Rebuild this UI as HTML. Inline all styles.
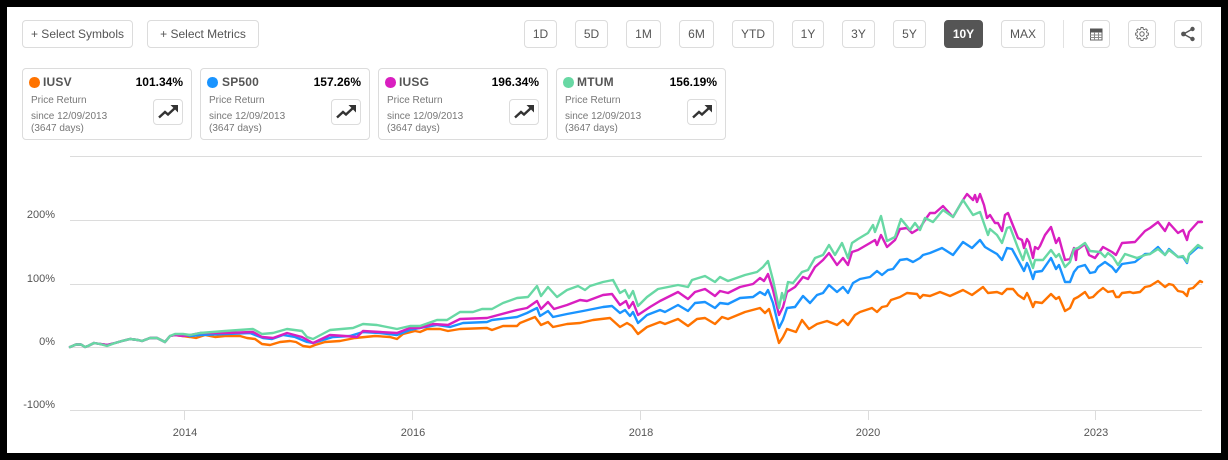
<!DOCTYPE html>
<html><head><meta charset="utf-8">
<style>
html,body{margin:0;padding:0;background:#000}
#p{position:relative;width:1228px;height:460px;background:#000;overflow:hidden;font-family:"Liberation Sans",sans-serif}
#w{position:absolute;left:7px;top:7px;width:1214px;height:446px;background:#fff}
.b{position:absolute;box-sizing:border-box;border:1px solid #dcdcdc;border-radius:4px;background:#fff;color:#555;font-size:12px;text-align:center;top:20px;height:28px;line-height:26px}
.b.on{background:#555;border-color:#555;color:#fff;font-weight:bold}
.c{position:absolute;box-sizing:border-box;top:68px;width:170px;height:72px;border:1px solid #dcdcdc;border-radius:4px;background:#fff}
.c i{position:absolute;left:6px;top:8px;width:10.5px;height:10.5px;border-radius:50%}
.c b.n{position:absolute;left:20px;top:6px;font-size:12px;line-height:14px;color:#555;letter-spacing:.2px}
.c b.v{position:absolute;right:8px;top:6px;font-size:12px;line-height:14px;color:#000}
.c span{position:absolute;left:8px;font-size:10px;line-height:13px;color:#777;white-space:nowrap}
.t{position:absolute;box-sizing:border-box;left:130px;top:30px;width:30px;height:26px;border:1px solid #dcdcdc;border-radius:4px}
.t svg{position:absolute;left:4px;top:4px}
.y{position:absolute;right:1173px;font-size:11px;line-height:13px;color:#555;white-space:nowrap}
.x{position:absolute;top:427px;font-size:11px;line-height:13px;color:#555;width:60px;text-align:center}
svg.ch{position:absolute;left:0;top:0}
svg.ch polyline{fill:none;stroke-width:2.4;stroke-linejoin:round;stroke-linecap:round}
</style></head><body>
<div id="p"><div id="w"></div>
<div class="b" style="left:22px;width:111px">+ Select Symbols</div>
<div class="b" style="left:147px;width:112px">+ Select Metrics</div>
<div class="b" style="left:524px;width:33px">1D</div>
<div class="b" style="left:575px;width:33px">5D</div>
<div class="b" style="left:626px;width:35px">1M</div>
<div class="b" style="left:679px;width:35px">6M</div>
<div class="b" style="left:732px;width:42px">YTD</div>
<div class="b" style="left:792px;width:32px">1Y</div>
<div class="b" style="left:842px;width:33px">3Y</div>
<div class="b" style="left:893px;width:33px">5Y</div>
<div class="b on" style="left:944px;width:39px">10Y</div>
<div class="b" style="left:1001px;width:44px">MAX</div>
<div style="position:absolute;left:1063px;top:20px;width:1px;height:28px;background:#e2e2e2"></div>
<div class="b" style="left:1082px;width:28px"><svg width="14" height="13" viewBox="0 0 14 13" style="position:absolute;left:6px;top:7px"><rect x="1.500" y="1" width="11.500" height="11" fill="#fff" stroke="#666"/><rect x="1" y="0.500" width="12.500" height="4" fill="#555"/><path d="M5.500 4v8M9.500 4v8M1 7h12M1 9.500h12" stroke="#888" stroke-width="1" fill="none"/></svg></div>
<div class="b" style="left:1128px;width:28px"><svg width="14" height="14" viewBox="0 0 14 14" style="position:absolute;left:6px;top:6px"><circle cx="7" cy="7" r="2.200" fill="none" stroke="#666"/><path d="M6 .500h2l.3 1.700 1.200.5L11 1.800l1.400 1.400-1 1.500.6 1.200 1.700.3v1.800l-1.700.3-.6 1.200 1 1.400-1.400 1.400-1.500-1-1.200.6L8 13.500H6l-.3-1.700-1.200-.6-1.500 1-1.400-1.400 1-1.400-.6-1.200L.3 8V6.200L2 5.900l.6-1.200-1-1.500L3 1.800l1.500.9 1.200-.5z" fill="none" stroke="#666" stroke-width=".9"/></svg></div>
<div class="b" style="left:1174px;width:28px"><svg width="16" height="16" viewBox="0 0 16 16" style="position:absolute;left:5px;top:5px"><path d="M12.500 3L3.500 8l9 5" fill="none" stroke="#555" stroke-width="1.400"/><circle cx="12.500" cy="3" r="2.200" fill="#555"/><circle cx="3.500" cy="8" r="2.400" fill="#555"/><circle cx="12.500" cy="13" r="2.200" fill="#555"/></svg></div>

<div class="c" style="left:22px"><i style="background:#ff7300"></i><b class="n">IUSV</b><b class="v">101.34%</b><span style="top:25px">Price Return</span><span style="top:41px">since 12/09/2013</span><span style="top:53px">(3647 days)</span><div class="t"><svg width="21" height="16" viewBox="0 0 21 16"><path d="M1 13.500l6-5.500 3 2.500 7-6.500" fill="none" stroke="#333" stroke-width="2.400"/><path d="M12.500 1h7.500v7.500z" fill="#333"/></svg></div></div>
<div class="c" style="left:200px"><i style="background:#1a94ff"></i><b class="n" style="left:21px">SP500</b><b class="v">157.26%</b><span style="top:25px">Price Return</span><span style="top:41px">since 12/09/2013</span><span style="top:53px">(3647 days)</span><div class="t"><svg width="21" height="16" viewBox="0 0 21 16"><path d="M1 13.500l6-5.500 3 2.500 7-6.500" fill="none" stroke="#333" stroke-width="2.400"/><path d="M12.500 1h7.500v7.500z" fill="#333"/></svg></div></div>
<div class="c" style="left:378px"><i style="background:#d91fc0"></i><b class="n">IUSG</b><b class="v">196.34%</b><span style="top:25px">Price Return</span><span style="top:41px">since 12/09/2013</span><span style="top:53px">(3647 days)</span><div class="t"><svg width="21" height="16" viewBox="0 0 21 16"><path d="M1 13.500l6-5.500 3 2.500 7-6.500" fill="none" stroke="#333" stroke-width="2.400"/><path d="M12.500 1h7.500v7.500z" fill="#333"/></svg></div></div>
<div class="c" style="left:556px"><i style="background:#68d8a4"></i><b class="n">MTUM</b><b class="v">156.19%</b><span style="top:25px">Price Return</span><span style="top:41px">since 12/09/2013</span><span style="top:53px">(3647 days)</span><div class="t"><svg width="21" height="16" viewBox="0 0 21 16"><path d="M1 13.500l6-5.500 3 2.500 7-6.500" fill="none" stroke="#333" stroke-width="2.400"/><path d="M12.500 1h7.500v7.500z" fill="#333"/></svg></div></div>

<svg class="ch" width="1228" height="460">
<path d="M70 156.500H1202M70 220.500H1202M70 284.500H1202M70 347.500H1202M70 410.500H1202" stroke="#dcdcdc" stroke-width="1" fill="none"/>
<path d="M184.500 411v9M412.500 411v9M640.500 411v9M868.500 411v9M1095.500 411v9" stroke="#dcdcdc" stroke-width="1" fill="none"/>
<polyline stroke="#ff7300" points="70,347 76,344.500 81,344.500 85,347 88,346 94,343 100,344 107,345 115,343 122,341 130,339 138,340 142,341 150,338 157,338 163,341 165,342 170,336 175,335 183,336 190,337 196,338 205,335 215,337 225,336 240,336 247,338 255,339 262,344 270,345 280,342 290,341 296,342 303,346 310,347 315,345 325,342 340,341 355,338 375,336 390,337 397,339 403,334 415,331 420,332 427,329 440,329 448,331 460,329 487,328 492,330 503,326 517,326 520,323 535,317 541,325 548,322 553,327 567,324 580,323 593,320 610,318 620,327 627,323 632,326 638,334 647,327 660,322 665,324 678,319 688,326 697,319 705,318 715,324 722,317 728,319 745,312 760,308 765,313 769,309 773,322 779,343 783,337 787,329 796,332 802,320 809,329 817,324 827,321 837,325 843,320 848,325 855,315 860,312 872,308 877,312 882,307 887,306 891,300 900,297 907,293 917,294 920,298 923,295 930,296 940,292 950,296 963,290 972,295 983,287 988,293 997,292 1002,294 1007,289 1013,289 1018,295 1024,299 1027,293 1029,297 1033,307 1035,302 1042,303 1051,294 1056,299 1059,297 1065,311 1070,308 1074,299 1078,297 1085,292 1089,298 1093,297 1098,292 1103,288 1108,292 1113,291 1116,297 1119,297 1122,293 1130,292 1133,293 1140,292 1145,287 1150,286 1158,281 1165,287 1169,284 1173,285 1178,291 1183,292 1187,296 1189,289 1193,288 1200,281 1202,282"/>
<polyline stroke="#1a94ff" points="70,347 76,344.500 81,344.500 85,347 88,346 94,343 100,344 107,345 115,343 122,341 130,339 138,340 142,341 150,338 157,338 163,341 165,342 170,336 175,335 183,335 190,336 200,335 225,334 250,333 263,338 272,339 283,335 295,337 307,342 313,343 333,337 350,336 363,332 380,333 397,335 410,330 420,328 437,325 450,327 463,323 487,322 492,320 517,317 527,313 537,308 540,316 548,311 553,317 567,314 583,311 603,307 612,306 620,313 625,310 630,316 633,312 638,323 647,315 660,310 665,312 678,305 688,311 695,303 705,302 715,308 720,303 728,304 740,298 753,297 760,292 765,295 768,290 773,303 779,328 783,320 787,308 795,307 803,296 810,303 817,295 823,293 829,285 837,292 843,287 848,293 853,283 860,279 870,277 877,271 882,275 888,270 893,269 900,260 907,259 913,262 920,258 923,255 930,253 942,248 953,255 963,242 972,248 980,240 985,247 990,250 997,254 1002,260 1007,248 1012,249 1018,260 1024,271 1027,263 1029,267 1033,279 1035,272 1042,271 1051,258 1056,269 1059,265 1065,282 1070,282 1074,272 1078,267 1085,265 1090,273 1095,272 1098,267 1105,262 1112,267 1116,272 1122,264 1135,262 1145,254 1150,254 1158,247 1165,255 1169,249 1178,257 1183,257 1187,263 1189,255 1198,247 1202,248"/>
<polyline stroke="#d91fc0" points="70,347 76,344.500 81,344.500 85,347 88,346 94,343 100,344 107,345 115,343 122,341 130,339 138,340 142,341 150,338 157,338 163,341 165,342 170,336 175,335 183,336 190,335 200,333 225,333 253,332 262,337 273,338 287,333 302,337 313,343 330,335 345,336 357,337 363,331 380,332 397,333 410,328 420,328 433,324 448,325 460,319 487,318 517,310 527,308 537,301 541,309 548,302 554,309 567,305 580,300 587,301 603,295 612,294 620,305 626,301 629,308 633,302 638,315 650,307 660,301 678,292 688,299 695,292 705,289 715,296 720,291 728,293 740,287 753,284 760,278 764,281 768,274 773,290 779,315 783,307 787,292 795,287 803,277 808,279 815,267 823,260 829,253 837,265 843,258 848,265 852,252 858,250 870,243 875,240 877,245 881,235 887,247 895,240 900,229 907,228 912,233 920,228 925,220 930,213 935,213 943,206 953,217 963,200 967,194 973,200 975,195 977,202 980,194 984,205 987,218 990,215 995,223 998,223 1002,231 1005,215 1008,213 1018,238 1022,240 1024,248 1027,239 1029,242 1033,258 1035,247 1038,249 1040,246 1045,235 1051,227 1056,243 1059,238 1065,260 1070,259 1074,248 1076,260 1077,250 1085,244 1089,255 1095,258 1103,247 1112,252 1116,255 1122,243 1135,242 1145,231 1150,228 1158,222 1165,231 1169,223 1178,233 1183,230 1187,240 1189,232 1198,222 1202,222"/>
<polyline stroke="#68d8a4" points="70,347 76,344.500 81,344.500 85,347 88,346 94,343 100,344 107,346 115,343 122,341 130,339 138,340 142,341 150,338 157,338 163,341 165,342 170,336 175,334 183,334 190,335 200,333 225,331 253,329 262,334 273,333 287,329 302,331 307,337 313,339 330,330 353,328 363,324 377,325 397,329 410,326 420,326 437,320 447,320 460,312 473,312 482,309 492,309 503,303 517,298 528,297 537,286 541,296 548,287 557,297 567,290 578,286 585,290 590,286 603,282 613,280 620,293 625,290 629,298 633,291 638,306 647,297 658,289 678,285 688,287 692,280 705,276 715,282 720,277 728,281 745,275 757,272 763,267 768,261 773,280 779,308 782,293 784,300 788,282 793,283 802,272 808,270 815,258 823,255 829,245 835,255 842,243 848,258 852,243 858,239 868,233 873,225 875,232 881,216 887,241 895,237 901,219 910,230 915,223 920,230 925,218 933,222 943,210 953,217 963,200 973,215 980,212 988,235 990,229 997,235 1002,243 1007,228 1010,227 1018,248 1023,260 1026,249 1033,268 1035,260 1043,260 1051,250 1056,257 1059,254 1065,267 1070,262 1074,249 1078,248 1085,243 1090,251 1100,252 1105,257 1108,253 1113,257 1118,265 1125,254 1137,258 1145,255 1150,254 1158,249 1165,255 1169,250 1178,257 1183,256 1187,262 1189,254 1198,245 1202,248"/>
</svg>
<div class="y" style="top:209px">200%</div>
<div class="y" style="top:273px">100%</div>
<div class="y" style="top:336px">0%</div>
<div class="y" style="top:399px">-100%</div>
<div class="x" style="left:155px">2014</div>
<div class="x" style="left:383px">2016</div>
<div class="x" style="left:611px">2018</div>
<div class="x" style="left:838px">2020</div>
<div class="x" style="left:1066px">2023</div>
</div>
</body></html>
